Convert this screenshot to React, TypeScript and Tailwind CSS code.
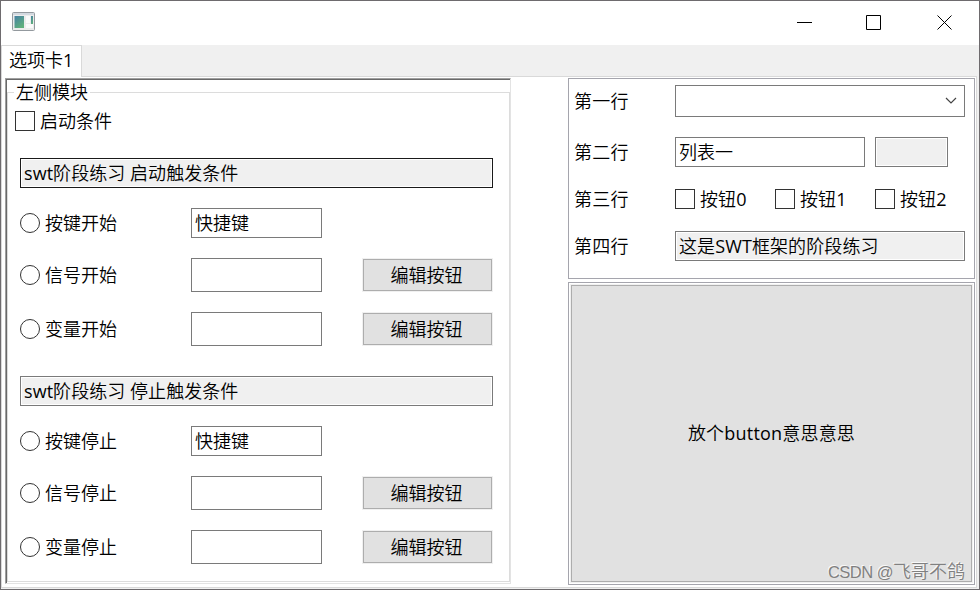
import { ReactNode } from 'react'

const startRows = ['按键开始', '信号开始', '变量开始']
const stopRows = ['按键停止', '信号停止', '变量停止']

// latin letters and digits are set a little heavier than the Chinese glyphs
function Latin({ children }: { children: ReactNode }) {
  return <span className="font-normal">{children}</span>
}

function Checkbox({ children }: { children: ReactNode }) {
  return (
    <label className="flex h-5 items-center gap-[5px]">
      <span className="h-5 w-5 shrink-0 border border-[#333] bg-white"></span>
      <span>{children}</span>
    </label>
  )
}

function TextBox({ className, children }: { className: string; children?: ReactNode }) {
  return (
    <div className={`flex shrink-0 items-center border border-[#7a7a7a] px-[3px] ${className}`}>
      {children}
    </div>
  )
}

function EditButton() {
  return (
    <button className="ml-[41px] flex h-[32px] w-[129px] items-center justify-center border border-[#adadad] bg-[#e1e1e1] pr-[2px] shadow-[0_0_0_1px_#f0f0f0]">
      编辑按钮
    </button>
  )
}

function TriggerGroup({ title, rows, focused }: { title: string; rows: string[]; focused?: boolean }) {
  return (
    <div className="flex w-[473px] flex-col gap-5">
      <div className={`flex h-[30px] items-center border bg-[#f0f0f0] px-[3px] tracking-[0.05px] shadow-[inset_0_0_0_1px_#fff] ${focused ? 'border-[#1a1a1a]' : 'border-[#7a7a7a]'}`}>
        <span><Latin>swt</Latin>阶段练习<Latin> </Latin>{title}</span>
      </div>
      {rows.map((row, i) => (
        <div key={row} className="flex items-center">
          <label className="flex w-[171px] items-center gap-[5px]">
            <span className="h-5 w-5 shrink-0 rounded-full border border-[#333] bg-white"></span>
            <span>{row}</span>
          </label>
          {i === 0 ? <TextBox className="h-[30px] w-[131px]">快捷键</TextBox> : <TextBox className="h-[34px] w-[131px]" />}
          {i > 0 && <EditButton />}
        </div>
      ))}
    </div>
  )
}

function TitleBar() {
  return (
    <div className="flex h-[44px] shrink-0 justify-between bg-white">
      <svg className="mt-[11px] ml-[11px]" width="23" height="19" viewBox="0 0 23 19">
        <defs>
          <linearGradient id="pane" x1="0" y1="0" x2="0.6" y2="1">
            <stop offset="0" stopColor="#4680a4" />
            <stop offset="1" stopColor="#5fb07c" />
          </linearGradient>
        </defs>
        <rect x="0.5" y="0.5" width="22" height="18" rx="1" fill="#ececec" stroke="#93999e" />
        <rect x="1" y="1" width="21" height="2" fill="#d3d9e0" />
        <rect x="2.5" y="4" width="9.5" height="12" fill="url(#pane)" />
        <rect x="14" y="4" width="4" height="7" fill="#fafafa" />
        <rect x="14" y="12" width="7" height="4" fill="#fafafa" />
        <rect x="19" y="4" width="2" height="8" fill="url(#pane)" />
      </svg>
      <svg className="mr-[26px]" width="156" height="44" viewBox="0 0 156 44" fill="none" stroke="#000">
        <path d="M0 21.5h15" />
        <path d="M69.5 14.5h14v14h-14z" />
        <path d="M140.5 14.5l14 14M154.5 14.5l-14 14" />
      </svg>
    </div>
  )
}

export default function App() {
  return (
    <div className="flex h-[590px] w-[980px] flex-col overflow-hidden border border-[#6e6b6e] bg-[#f0f0f0] font-['Open_Sans','Noto_Sans_CJK_SC',sans-serif] text-[18px] leading-[24px] font-[350] whitespace-nowrap text-black">
      <TitleBar />

      {/* Tab strip */}
      <div className="flex h-[32px] shrink-0">
        <div className="w-[81px] border-t border-r border-l border-[#d9d9d9] bg-white pt-[2px] pl-[7px]">选项卡<Latin>1</Latin></div>
        <div className="mr-[2px] flex-1 border-b border-[#d9d9d9]"></div>
      </div>

      {/* Tab page */}
      <div className="mr-[2px] mb-px flex flex-1 justify-between border-r border-b border-l border-[#d9d9d9] bg-white">
        {/* Left module */}
        <div className="mt-px ml-[3px] h-[506px] w-[506px] border-t border-r border-b border-l border-t-[#a0a0a0] border-r-[#e3e3e3] border-b-[#e3e3e3] border-l-[#a0a0a0]">
          <div className="h-full border-t border-l border-[#696969]">
            <fieldset className="h-[502px] border border-[#dcdcdc] pl-[12px]">
              <legend className="-ml-[6px] px-[2px]">左侧模块</legend>
              <div className="-ml-[5px] pt-[7px]">
                <Checkbox>启动条件</Checkbox>
              </div>
              <div className="mt-[27px] flex flex-col gap-[30px]">
                <TriggerGroup title="启动触发条件" rows={startRows} focused />
                <TriggerGroup title="停止触发条件" rows={stopRows} />
              </div>
            </fieldset>
          </div>
        </div>

        {/* Right side */}
        <div className="mt-px mr-px flex w-[407px] flex-col gap-[3px]">
          <div className="h-[201px] border border-[#a5a5ad] pt-[6px] pl-[5px]">
            <div className="flex h-[32px] items-center">
              <span className="w-[101px] shrink-0 tracking-[0.3px]">第一行</span>
              <TextBox className="h-[32px] w-[290px] justify-end">
                <svg className="mr-[4px]" width="12" height="8" viewBox="0 0 12 8" fill="none" stroke="#444" strokeWidth="1.2">
                  <path d="M1 1l5 5 5-5" />
                </svg>
              </TextBox>
            </div>
            <div className="mt-5 flex h-[30px] items-center">
              <span className="w-[101px] shrink-0 tracking-[0.3px]">第二行</span>
              <TextBox className="h-[30px] w-[190px]">列表一</TextBox>
              <TextBox className="ml-[10px] h-[30px] w-[73px] bg-[#f0f0f0] shadow-[inset_0_0_0_1px_#fff]" />
            </div>
            <div className="mt-[22px] flex h-5 items-center">
              <span className="w-[101px] shrink-0 tracking-[0.3px]">第三行</span>
              {[0, 1, 2].map((n) => (
                <div key={n} className="w-[100px] shrink-0 tracking-[0.1px]">
                  <Checkbox>按钮<Latin>{n}</Latin></Checkbox>
                </div>
              ))}
            </div>
            <div className="mt-[22px] flex h-[30px] items-center">
              <span className="w-[101px] shrink-0 tracking-[0.3px]">第四行</span>
              <TextBox className="h-[30px] w-[290px] bg-[#f0f0f0] tracking-[0.1px] shadow-[inset_0_0_0_1px_#fff]">
                <span>这是<Latin>SWT</Latin>框架的阶段练习</span>
              </TextBox>
            </div>
          </div>

          <div className="relative h-[303px] border border-[#a5a5ad] p-[2px]">
            <button className="flex h-full w-full items-center justify-center border border-[#adadad] bg-[#e1e1e1] pb-[2px] tracking-[0.2px] shadow-[0_0_0_1px_#f0f0f0]">
              <span>放个<Latin>button</Latin>意思意思</span>
            </button>
            <span className="absolute right-[9px] bottom-0 font-['Liberation_Sans','Noto_Sans_CJK_SC',sans-serif] text-[18px] text-[#808080] [text-shadow:-1px_-1px_0_#f8f8f8]">
              <span className="text-[16.5px] tracking-[-0.5px]">CSDN @</span>飞哥不鸽
            </span>
          </div>
        </div>
      </div>
    </div>
  )
}
